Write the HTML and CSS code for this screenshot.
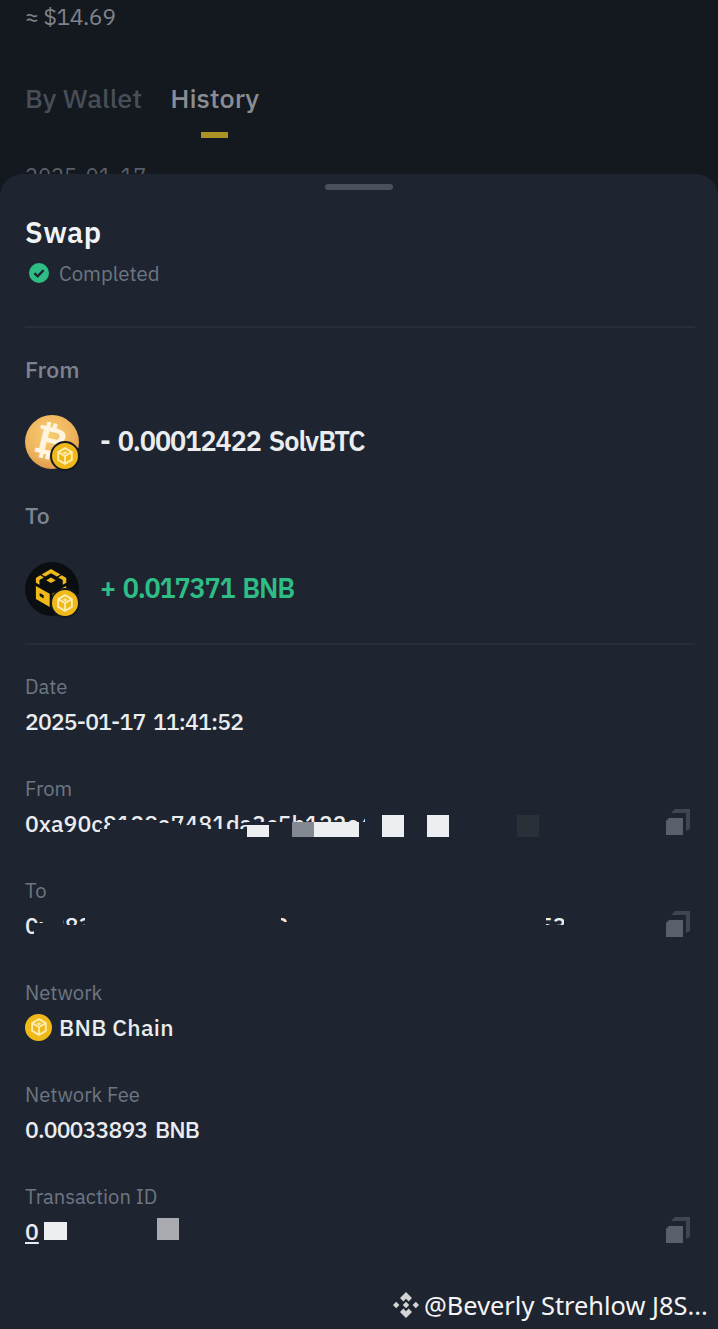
FILE: index.html
```html
<!DOCTYPE html>
<html lang="en">
<head>
<meta charset="utf-8">
<title>Swap details</title>
<link rel="stylesheet" href="styles.css">
</head>
<body>
<svg class="defs" width="0" height="0" aria-hidden="true">
  <defs>
    <radialGradient id="btcg" cx="0.45" cy="0.35" r="0.75">
      <stop offset="0" stop-color="#f8cd74"/>
      <stop offset="0.6" stop-color="#eeb35c"/>
      <stop offset="1" stop-color="#d98f42"/>
    </radialGradient>
    <symbol id="cube" viewBox="0 0 24 24">
      <path d="M12 2.600l8.200 4.700v9.400L12 21.400l-8.200-4.700V7.300zM3.800 7.300L12 12l8.200-4.700M12 12v9.400" fill="none" stroke="currentColor" stroke-width="2.200" stroke-linejoin="round"/>
      <path d="M12 6.200l3.200 1.800L12 9.800 8.800 8z" fill="currentColor"/>
    </symbol>
    <symbol id="cube-solid" viewBox="0 0 36 40">
      <path d="M18 0l10 5.700-3.800 2.200L18 4.300l-6.200 3.600L8 5.700zM6.600 6.600l3.800 2.200-4.600 2.700v5.100l-3.800-2.200V9.300zM29.400 6.600l4.800 2.700v5.100l-3.800 2.200v-5.100l-4.800-2.700zM18 8.800l5 2.900-5 2.900-5-2.900z" fill="currentColor"/>
      <path d="M2 17.800l14.600 8.400V40L2 31.600zM6 25.200v3.400l4.200 2.400v-3.400z" fill="currentColor" fill-rule="evenodd"/>
      <path d="M34 17.800v13.800L19.400 40V26.200z" fill="currentColor"/>
    </symbol>
    <symbol id="copy" viewBox="0 0 24 26">
      <path d="M9 0h15v20l-4 2V4H5z" fill="#3f4652"/>
      <path d="M3 9h14v17H0V12z" fill="#59606c"/>
    </symbol>
  </defs>
</svg>
<div class="page">
  <header class="behind">
    <div class="approx">≈ $14.69</div>
    <nav class="tabs">
      <span class="tab">By Wallet</span>
      <span class="tab tab-active">History</span>
    </nav>
    <div class="group-date">2025-01-17</div>
  </header>

  <main class="sheet">
    <div class="handle"></div>
    <h1 class="title">Swap</h1>
    <div class="status">
      <svg class="status-icon" viewBox="0 0 20 20"><circle cx="10" cy="10" r="10" fill="#2ebd85"/><path d="M5.400 10.200l3.200 3.200 6-6.200" fill="none" stroke="#1e2530" stroke-width="2.400"/></svg>
      <span>Completed</span>
    </div>

    <section class="swap">
      <div class="swap-label">From</div>
      <div class="asset">
        <div class="coin">
          <svg class="coin-main" viewBox="0 0 54 54">
            <circle cx="27" cy="27" r="27" fill="url(#btcg)"/>
            <text class="btc-glyph" x="26" y="40" transform="rotate(14 26 27)">₿</text>
          </svg>
          <span class="badge"><svg class="badge-cube"><use href="#cube"/></svg></span>
        </div>
        <div class="amount">- 0.00012422 SolvBTC</div>
      </div>
      <div class="swap-label swap-label-to">To</div>
      <div class="asset">
        <div class="coin">
          <svg class="coin-main coin-bnb" viewBox="0 0 54 54">
            <circle cx="27" cy="27" r="27" fill="#0b0e11"/>
            <use href="#cube-solid" x="9" y="7" width="34" height="38"/>
          </svg>
          <span class="badge"><svg class="badge-cube"><use href="#cube"/></svg></span>
        </div>
        <div class="amount amount-up">+ 0.017371 BNB</div>
      </div>
    </section>

    <section class="details">
      <div class="field">
        <div class="label">Date</div>
        <div class="value tight">2025-01-17 11:41:52</div>
      </div>
      <div class="field">
        <div class="label">From</div>
        <div class="value mono clip-from">0xa90c8128a7481da3c5b122e44f</div>
        <i class="blot blot-a"></i><i class="blot blot-b"></i><i class="blot blot-c"></i><i class="blot blot-d"></i><i class="blot blot-e"></i><i class="blot blot-f"></i>
        <svg class="copy"><use href="#copy"/></svg>
      </div>
      <div class="field">
        <div class="label">To</div>
        <div class="value mono clip-to">0x8838c2a6f1d07e94b3a5c1de8027f4b6193ad535</div>
        <svg class="copy"><use href="#copy"/></svg>
      </div>
      <div class="field">
        <div class="label">Network</div>
        <div class="value network">
          <span class="net-coin"><svg class="net-cube"><use href="#cube"/></svg></span>
          <span class="net-name">BNB Chain</span>
        </div>
      </div>
      <div class="field">
        <div class="label">Network Fee</div>
        <div class="value tight">0.00033893 BNB</div>
      </div>
      <div class="field">
        <div class="label">Transaction ID</div>
        <div class="value"><span class="tx-start">0</span></div>
        <i class="blot blot-g"></i><i class="blot blot-h"></i>
        <svg class="copy"><use href="#copy"/></svg>
      </div>
    </section>
  </main>

  <div class="watermark">
    <svg class="wm-logo" viewBox="0 0 26 26">
      <path d="M13 0l6 6-3.400 3.400L13 6.800l-2.600 2.600L7 6zM3.200 9.800L6.400 13l-3.200 3.200L0 13zM22.800 9.800L26 13l-3.200 3.200L19.600 13zM13 9.800l3.200 3.200-3.200 3.200L9.800 13zM10.400 16.600L13 19.200l2.600-2.600L19 20l-6 6-6-6z" fill="#d4d4d4"/>
    </svg>
    <span>@Beverly Strehlow J8S...</span>
  </div>
</div>
</body>
</html>
```

FILE: styles.css
```css
* { box-sizing: border-box; }
html, body { margin: 0; padding: 0; }
body {
  background: #14181f;
  font-family: "IBM Plex Sans", Roboto, "Liberation Sans", sans-serif;
  color: #eaecef;
}
.defs { position: absolute; }
.page {
  position: relative;
  width: 718px;
  height: 1329px;
  overflow: hidden;
  display: flex;
  flex-direction: column;
}
.behind {
  height: 174px;
  flex: none;
  padding: 0 25px;
  overflow: hidden;
}
.approx {
  height: 33px;
  font-size: 23px;
  line-height: 33px;
  color: #7e838b;
  letter-spacing: -.5px;
}
.tabs {
  display: flex;
  gap: 28px;
  margin-top: 47px;
}
.tab {
  position: relative;
  font-size: 27px;
  line-height: 36px;
  font-weight: 500;
  color: #484e57;
}
.tab-active { color: #8a8d93; }
.tab-active::after {
  content: "";
  position: absolute;
  left: 31px;
  top: 52px;
  width: 27px;
  height: 6px;
  background: #ab9227;
}
.group-date {
  margin-top: 46px;
  font-size: 22px;
  line-height: 28px;
  color: #5a5f67;
  letter-spacing: -.2px;
}
.sheet {
  position: relative;
  flex: 1;
  background: #1e2530;
  border-radius: 22px 22px 0 0;
  padding: 0 25px;
  display: flex;
  flex-direction: column;
}
.handle {
  align-self: center;
  width: 68px;
  height: 6px;
  margin-top: 10px;
  border-radius: 3px;
  background: #4a515d;
}
.title {
  margin: 24px 0 0;
  font-size: 29px;
  line-height: 36px;
  font-weight: 600;
  color: #f2f3f5;
  letter-spacing: .5px;
}
.status {
  display: flex;
  align-items: center;
  gap: 10px;
  margin-top: 7px;
  padding-left: 4px;
  height: 32px;
  font-size: 20.400px;
  color: #6f7682;
}
.status-icon { width: 20px; height: 20px; }
.swap {
  margin-top: 37px;
  margin-right: -2px;
  border-top: 2px solid #272e39;
  border-bottom: 2px solid #272e39;
  height: 319px;
  padding-top: 25px;
}
.swap-label {
  font-size: 23px;
  line-height: 32px;
  font-weight: 500;
  color: #7d8490;
}
.swap-label-to { margin-top: 30px; }
.asset {
  display: flex;
  align-items: center;
  gap: 21px;
  margin-top: 30px;
}
.swap-label-to + .asset { margin-top: 31px; }
.coin {
  position: relative;
  width: 54px;
  height: 54px;
  flex: none;
}
.coin-main { display: block; width: 54px; height: 54px; }
.coin-bnb { color: #efb91a; }
.btc-glyph {
  font-family: "DejaVu Sans", sans-serif;
  font-size: 40px;
  font-weight: 700;
  fill: #fff4df;
  text-anchor: middle;
}
.badge {
  position: absolute;
  right: -1px;
  bottom: -2px;
  width: 30px;
  height: 30px;
  border-radius: 50%;
  background: #efb91a;
  border: 2.500px solid #14181f;
  color: #ffecb0;
  display: flex;
  align-items: center;
  justify-content: center;
}
.badge-cube { width: 20px; height: 20px; }
.amount {
  position: relative;
  top: -1px;
  font-size: 27px;
  line-height: 36px;
  font-weight: 600;
  color: #eaecef;
  letter-spacing: -1.050px;
  word-spacing: 2.500px;
}
.amount-up { color: #2ebd85; letter-spacing: -1.200px; }
.details {
  padding-top: 25px;
  display: flex;
  flex-direction: column;
  gap: 32px;
}
.field { position: relative; height: 70px; }
.label {
  height: 33px;
  font-size: 20.200px;
  line-height: 34px;
  color: #6f7682;
}
.value {
  height: 36px;
  font-size: 23px;
  line-height: 36px;
  font-weight: 500;
  color: #eaecef;
}
.tight { letter-spacing: -.85px; word-spacing: 3px; }
.mono { white-space: nowrap; }
.clip-from {
  clip-path: path("M0 0H75V36H0Z M75 0H85V24H75Z M85 0H132V15H85Z M132 0H155V18H132Z M155 0H180V20H155Z M180 0H222V24H180Z M222 0H340V17H222Z");
}
.clip-to {
  clip-path: path("M0 0H9V30H0Z M9 0H20V16H9Z M38 0H60V18H38Z M256 0H262V15H256Z M521 0H539V18H521Z");
}
.network { display: flex; align-items: center; gap: 7px; }
.net-name { letter-spacing: .3px; }
.net-coin {
  width: 27px;
  height: 27px;
  border-radius: 50%;
  background: #efb91a;
  color: #ffecb0;
  display: flex;
  align-items: center;
  justify-content: center;
}
.net-cube { width: 20px; height: 20px; }
.tx-start { text-decoration: underline; }
.copy {
  position: absolute;
  right: 3px;
  top: 37px;
  width: 24px;
  height: 26px;
}
.blot { position: absolute; display: block; }
.blot-a { left: 222px; top: 53px; width: 22px; height: 12px; background: #eceef1; }
.blot-b { left: 267px; top: 50px; width: 22px; height: 15px; background: #848890; }
.blot-c { left: 289px; top: 50px; width: 45px; height: 15px; background: #eceef1; }
.blot-d { left: 357px; top: 43px; width: 22px; height: 22px; background: #eceef1; }
.blot-e { left: 402px; top: 43px; width: 22px; height: 22px; background: #eceef1; }
.blot-f { left: 492px; top: 43px; width: 22px; height: 22px; background: #2a3038; }
.blot-g { left: 19px; top: 42px; width: 23px; height: 18px; background: #eceef1; }
.blot-h { left: 132px; top: 38px; width: 22px; height: 22px; background: #a9abb0; }
.watermark {
  position: absolute;
  left: 393px;
  top: 1288px;
  display: flex;
  align-items: center;
  gap: 5px;
  height: 34px;
  font-family: "Noto Sans", sans-serif;
  font-size: 25.400px;
  color: #f4f4f4;
  white-space: nowrap;
}
.wm-logo { width: 26px; height: 26px; flex: none; }
```
